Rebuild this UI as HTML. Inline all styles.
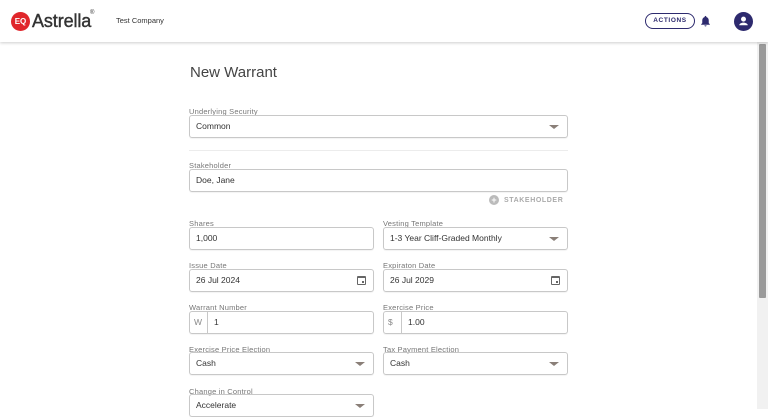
<!DOCTYPE html>
<html><head><style>
*{box-sizing:border-box;margin:0;padding:0}
body{width:768px;height:409px;overflow:hidden;background:#fff;font-family:"Liberation Sans",sans-serif;position:relative;color:#333}
.hdr{position:absolute;left:0;top:0;width:768px;height:42px;background:#fff;box-shadow:0 1px 3px rgba(0,0,0,.2);z-index:2}
.sb{position:absolute;left:757px;top:42px;width:11px;height:367px;background:#f1f1f1}
.sb div{position:absolute;left:2px;top:2px;width:7px;height:254px;background:#9a9a9a;border-radius:1px}
.lbl{position:absolute;font-size:7.5px;color:#777;letter-spacing:.2px;line-height:9px}
.box{position:absolute;height:23px;border:1px solid #c8c8c8;border-radius:3px;font-size:8.5px;color:#333;padding:0 0 0 6px;line-height:21px;box-shadow:0 1px 1px rgba(0,0,0,.05)}
.arr{position:absolute;right:8px;top:9px;width:0;height:0;border-left:5px solid transparent;border-right:5px solid transparent;border-top:4px solid #8a7f78}
.cal{position:absolute;right:7px;top:6px;width:9px;height:9px;border:1.5px solid #666;border-top-width:2.5px;border-radius:1px}
.cal:after{content:"";position:absolute;right:1px;bottom:1px;width:2px;height:2px;background:#666}
.pre{display:inline-block;width:14px;color:#888;border-right:1px solid #c8c8c8;margin-right:6px;height:21px}
</style></head><body>
<div class="hdr">
 <div style="position:absolute;left:11px;top:12px;width:19px;height:19px;border-radius:50%;background:#e0262b;color:#fff;font-size:8px;font-weight:bold;text-align:center;line-height:19px">EQ</div>
 <div style="position:absolute;left:32px;top:10px;font-size:18px;line-height:22px;color:#333;letter-spacing:-.1px;-webkit-text-stroke:.4px #333">Astrella</div>
 <div style="position:absolute;left:90px;top:10px;font-size:6px;color:#333">®</div>
 <div style="position:absolute;left:116px;top:16px;font-size:7.5px;color:#333;line-height:9px">Test Company</div>
 <div style="position:absolute;left:645px;top:13px;width:50px;height:16px;border:1px solid #2d2a6e;border-radius:8px;font-size:6.5px;font-weight:bold;color:#2d2a6e;text-align:center;line-height:14px;letter-spacing:.6px">ACTIONS</div>
 <svg style="position:absolute;left:699px;top:14px" width="13" height="14" viewBox="0 0 24 24"><path fill="#2d2a6e" d="M12 22c1.1 0 2-.9 2-2h-4c0 1.1.9 2 2 2zm6-6v-5c0-3.1-1.6-5.6-4.5-6.3V4c0-.8-.7-1.5-1.5-1.5s-1.5.7-1.5 1.5v.7C7.6 5.4 6 7.9 6 11v5l-2 2v1h16v-1l-2-2z"/></svg>
 <svg style="position:absolute;left:734px;top:12px" width="19" height="19" viewBox="0 0 20 20"><circle cx="10" cy="10" r="10" fill="#2d2a6e"/><circle cx="10" cy="7.5" r="2.6" fill="#fff"/><path d="M5.5 14c0-2 3-2.8 4.5-2.8s4.5.8 4.5 2.8z" fill="#fff"/></svg>
</div>
<div class="sb"><div></div></div>

<div style="position:absolute;left:190px;top:64px;font-size:15px;line-height:18px;color:#444">New Warrant</div>

<div class="lbl" style="left:189px;top:107px">Underlying Security</div>
<div class="box" style="left:189px;top:115px;width:379px">Common<div class="arr"></div></div>
<div style="position:absolute;left:189px;top:150px;width:379px;height:1px;background:#ececec"></div>

<div class="lbl" style="left:189px;top:161px">Stakeholder</div>
<div class="box" style="left:189px;top:169px;width:379px">Doe, Jane</div>
<div style="position:absolute;left:489px;top:195px;width:10px;height:10px;border-radius:50%;background:#bbb;color:#fff;font-size:9px;line-height:10px;text-align:center;font-weight:bold">+</div>
<div style="position:absolute;left:504px;top:196px;font-size:7px;line-height:9px;color:#aaa;font-weight:bold;letter-spacing:.6px">STAKEHOLDER</div>

<div class="lbl" style="left:189px;top:219px">Shares</div>
<div class="box" style="left:189px;top:227px;width:185px">1,000</div>
<div class="lbl" style="left:383px;top:219px">Vesting Template</div>
<div class="box" style="left:383px;top:227px;width:185px">1-3 Year Cliff-Graded Monthly<div class="arr"></div></div>

<div class="lbl" style="left:189px;top:261px">Issue Date</div>
<div class="box" style="left:189px;top:269px;width:185px">26 Jul 2024<div class="cal"></div></div>
<div class="lbl" style="left:383px;top:261px">Expiraton Date</div>
<div class="box" style="left:383px;top:269px;width:185px">26 Jul 2029<div class="cal"></div></div>

<div class="lbl" style="left:189px;top:303px">Warrant Number</div>
<div class="box" style="left:189px;top:311px;width:185px;padding-left:4px"><span class="pre">W</span>1</div>
<div class="lbl" style="left:383px;top:303px">Exercise Price</div>
<div class="box" style="left:383px;top:311px;width:185px;padding-left:4px"><span class="pre">$</span>1.00</div>

<div class="lbl" style="left:189px;top:345px">Exercise Price Election</div>
<div class="box" style="left:189px;top:352px;width:185px">Cash<div class="arr"></div></div>
<div class="lbl" style="left:383px;top:345px">Tax Payment Election</div>
<div class="box" style="left:383px;top:352px;width:185px">Cash<div class="arr"></div></div>

<div class="lbl" style="left:189px;top:387px">Change in Control</div>
<div class="box" style="left:189px;top:394px;width:185px">Accelerate<div class="arr"></div></div>
</body></html>
